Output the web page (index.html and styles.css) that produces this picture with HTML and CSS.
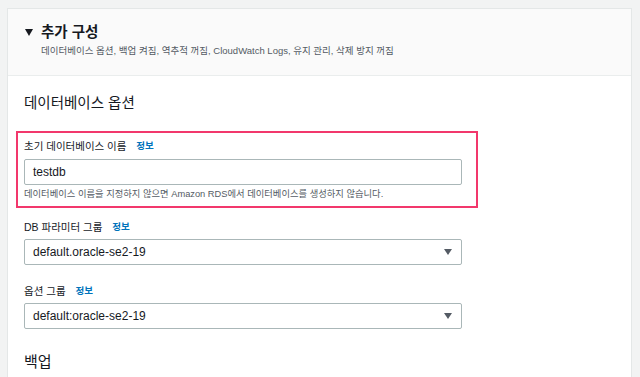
FILE: index.html
```html
<!DOCTYPE html>
<html lang="ko">

<head>
    <meta charset="UTF-8">
    <meta name="viewport" content="width=device-width, initial-scale=1.0">
    <title>추가 구성</title>
    <link rel="stylesheet" href="styles.css">
</head>

<body>
    <div class="card">
        <div class="card-header">
            <div class="title-row">
                <span class="caret"></span>
                <h2 class="card-title">추가 구성</h2>
            </div>
            <p class="card-desc">데이터베이스 옵션, 백업 켜짐, 역추적 꺼짐, CloudWatch Logs, 유지 관리, 삭제 방지 꺼짐</p>
        </div>

        <div class="card-body">
            <h3 class="section-title">데이터베이스 옵션</h3>

            <!-- 강조 표시된 필드 -->
            <div class="highlight">
                <div class="field">
                    <label class="field-label">초기 데이터베이스 이름 <a class="info">정보</a></label>
                    <div class="input">testdb</div>
                    <p class="field-help">데이터베이스 이름을 지정하지 않으면 Amazon RDS에서 데이터베이스를 생성하지 않습니다.</p>
                </div>
            </div>

            <div class="field field-gap">
                <label class="field-label">DB 파라미터 그룹 <a class="info">정보</a></label>
                <div class="input select">
                    <span>default.oracle-se2-19</span>
                    <span class="arrow"></span>
                </div>
            </div>

            <div class="field field-gap2">
                <label class="field-label">옵션 그룹 <a class="info">정보</a></label>
                <div class="input select">
                    <span>default:oracle-se2-19</span>
                    <span class="arrow"></span>
                </div>
            </div>

            <h3 class="section-title backup">백업</h3>
        </div>
    </div>
</body>

</html>
```

FILE: styles.css
```css
body {
    margin: 0;
    padding: 8px 8px 0 7px;
    background: #f2f3f3;
    font-family: "Liberation Sans", "Noto Sans CJK KR", sans-serif;
    color: #16191f;
    height: 377px;
    box-sizing: border-box;
    overflow: hidden;
}

.card {
    background: #fff;
    border: 1px solid #e4e7e7;
    border-bottom: none;
    height: 100%;
}

/* header */
.card-header {
    background: #fafafa;
    border-bottom: 1px solid #eaeded;
    padding: 13px 16px 17px 17px;
}

.title-row {
    display: flex;
    align-items: center;
    height: 20px;
}

.caret {
    width: 0;
    height: 0;
    border-left: 4px solid transparent;
    border-right: 4px solid transparent;
    border-top: 7px solid #16191f;
    margin-right: 8px;
}

.card-title {
    margin: 0;
    font-size: 14.5px;
    line-height: 20px;
    font-weight: 700;
}

.card-desc {
    margin: 2px 0 0 16px;
    font-size: 9.5px;
    line-height: 14px;
    color: #545b64;
}

/* body */
.card-body {
    padding: 16px 0 0 16px;
}

.section-title {
    margin: 0;
    font-size: 14.5px;
    line-height: 22px;
    font-weight: 400;
}

.highlight {
    margin: 17px 0 0 -8px;
    width: 452px;
    border: 2px solid #f2386c;
    padding: 5px 0 5px 6px;
}

.field {
    width: 438px;
}

.field-gap {
    margin-top: 11px;
}

.field-gap2 {
    margin-top: 18px;
}

.field-label {
    display: flex;
    align-items: center;
    height: 16px;
    font-size: 10.5px;
    line-height: 16px;
    margin-bottom: 4px;
    white-space: pre;
}

.highlight .field-label {
    margin-bottom: 5px;
}

.info {
    color: #0073bb;
    font-size: 9.5px;
    font-weight: 700;
    margin-left: 7px;
}

.input {
    box-sizing: border-box;
    height: 26px;
    border: 1px solid #aab7b8;
    border-radius: 2px;
    padding: 0 8px;
    font-size: 12px;
    line-height: 24px;
}

.select {
    display: flex;
    justify-content: space-between;
    align-items: center;
}

.arrow {
    width: 0;
    height: 0;
    border-left: 4.5px solid transparent;
    border-right: 4.5px solid transparent;
    border-top: 6px solid #545b64;
    margin-right: 1px;
}

.field-help {
    margin: 2px 0 0;
    font-size: 9.3px;
    line-height: 14px;
    color: #545b64;
}

.backup {
    margin-top: 22px;
    font-size: 15px;
}
```
